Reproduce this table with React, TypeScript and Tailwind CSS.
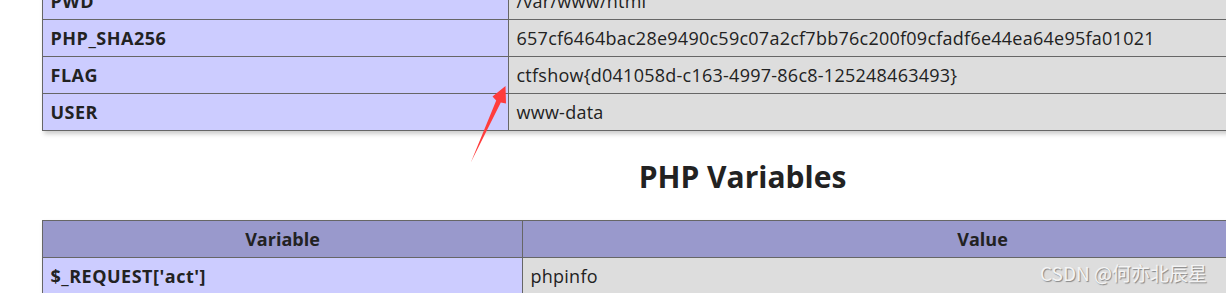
import React from "react";

const font = { fontFamily: '"Open Sans", "Noto Sans", sans-serif' };

const topRows: [string, string][] = [
  ["PWD", "/var/www/html"],
  ["PHP_SHA256", "657cf6464bac28e9490c59c07a2cf7bb76c200f09cfadf6e44ea64e95fa01021"],
  ["FLAG", "ctfshow{d041058d-c163-4997-86c8-125248463493}"],
  ["USER", "www-data"],
];

export default function App() {
  return (
    <div
      className="relative w-[1226px] h-[293px] overflow-hidden bg-white text-[#222]"
      style={font}
    >
      <div className="w-[1485px] flex flex-col items-center -mt-[18px]">
        <table className="border-collapse w-[1401px] shadow-[1.5px_3px_4.5px_#ccc] text-[18px] leading-[24px]">
          <tbody>
            {topRows.map(([k, v]) => (
              <tr key={k}>
                <td className="border border-[#666] bg-[#ccf] font-bold tracking-[0.5px] w-[466px] px-[7.5px] py-[6px] align-baseline">
                  {k}
                </td>
                <td className="border border-[#666] bg-[#ddd] tracking-[0.25px] px-[7.5px] py-[6px] align-baseline">
                  {v}
                </td>
              </tr>
            ))}
          </tbody>
        </table>
        <h2 className="mt-[28px] text-[30px] leading-[36px] font-bold">PHP Variables</h2>
        <table className="mt-[25px] border-collapse w-[1401px] shadow-[1.5px_3px_4.5px_#ccc] text-[18px] leading-[24px]">
          <tbody>
            <tr>
              <th className="border border-[#666] bg-[#99c] font-bold w-[480px] px-[7.5px] py-[6px] text-center">
                Variable
              </th>
              <th className="border border-[#666] bg-[#99c] font-bold px-[7.5px] py-[6px] text-center">
                Value
              </th>
            </tr>
            <tr>
              <td className="border border-[#666] bg-[#ccf] font-bold tracking-[0.5px] px-[7.5px] py-[6px]">
                $_REQUEST['act']
              </td>
              <td className="border border-[#666] bg-[#ddd] tracking-[0.25px] px-[7.5px] py-[6px]">phpinfo</td>
            </tr>
          </tbody>
        </table>
      </div>

      <svg className="absolute left-0 top-0 pointer-events-none" width="1226" height="293">
        <polygon
          points="471,162 496.2,100.5 492.5,96.5 505.5,86 506,103.5 500.8,102.5"
          fill="#ff3c3c"
        />
      </svg>

      <div
        className="absolute left-[1040px] top-[260px] text-[19px] leading-[26px] text-[#f4f4f4] [text-shadow:1px_1px_1px_rgba(0,0,0,0.4)] whitespace-nowrap"
        style={{ fontFamily: '"Noto Sans CJK SC", "Liberation Sans", sans-serif' }}
      >
        CSDN @何亦北辰星
      </div>
    </div>
  );
}
